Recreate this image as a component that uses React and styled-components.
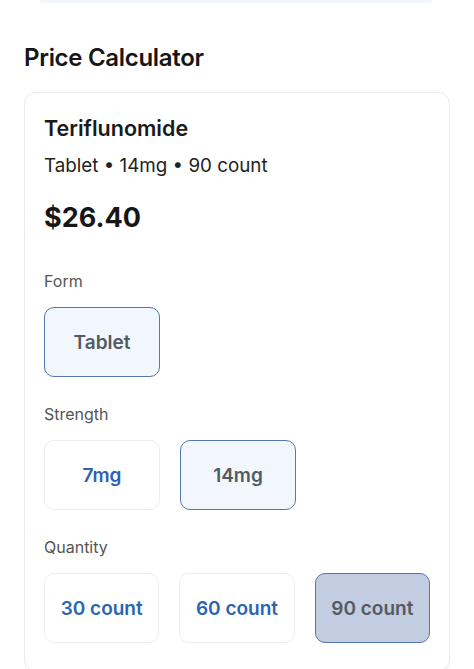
import React, { useState } from 'react';
import styled, { createGlobalStyle } from 'styled-components';

const GlobalStyle = createGlobalStyle`
  html, body {
    margin: 0;
    padding: 0;
    background: #fff;
  }
  body {
    font-family: Inter, "Noto Sans", sans-serif;
    color: #1a1a1a;
    -webkit-font-smoothing: antialiased;
  }
`;

const forms = ['Tablet'];
const strengths = ['7mg', '14mg'];
const quantities = ['30 count', '60 count', '90 count'];

const App = () => {
  const [form, setForm] = useState('Tablet');
  const [strength, setStrength] = useState('14mg');
  const [quantity, setQuantity] = useState('90 count');

  return (
    <Page>
      <GlobalStyle />
      <TopEdge />
      <Heading>Price Calculator</Heading>
      <Card>
        <DrugName>Teriflunomide</DrugName>
        <Summary>{form} • {strength} • {quantity}</Summary>
        <Price>$26.40</Price>

        <Group>
          <Label>Form</Label>
          <Options>
            {forms.map((f) => (
              <Option key={f} $selected={form === f} onClick={() => setForm(f)}>{f}</Option>
            ))}
          </Options>
        </Group>

        <Group>
          <Label>Strength</Label>
          <Options>
            {strengths.map((s) => (
              <Option key={s} $selected={strength === s} onClick={() => setStrength(s)}>{s}</Option>
            ))}
          </Options>
        </Group>

        <Group>
          <Label>Quantity</Label>
          <Options>
            {quantities.map((q) => (
              <Option
                key={q}
                $selected={quantity === q}
                $strong={quantity === q}
                onClick={() => setQuantity(q)}
              >
                {q}
              </Option>
            ))}
          </Options>
        </Group>
      </Card>
    </Page>
  );
};

export default App;

const Page = styled.div`
  padding: 0 24px;
`;

const TopEdge = styled.div`
  height: 3px;
  margin: 0 18px 0 16px;
  background: #f1f6fa;
  border-radius: 0 0 4px 4px;
`;

const Heading = styled.h2`
  margin: 40px 0 20px;
  font-size: 24px;
  font-weight: 600;
  letter-spacing: -0.3px;
  color: #161616;
`;

const Card = styled.div`
  border: 1px solid #ebebeb;
  border-radius: 12px;
  padding: 22px 19px 28px;
`;

const DrugName = styled.div`
  font-size: 21.5px;
  font-weight: 600;
  color: #1a1a1a;
`;

const Summary = styled.div`
  margin-top: 13px;
  font-size: 18.8px;
  color: #222;
`;

const Price = styled.div`
  margin-top: 24px;
  font-size: 27px;
  font-weight: 700;
  color: #161616;
`;

const Group = styled.div`
  margin-top: 37px;

  & + & {
    margin-top: 27px;
  }
`;

const Label = styled.div`
  font-size: 16px;
  color: #555;
`;

const Options = styled.div`
  display: flex;
  gap: 20px;
  margin-top: 16px;
`;

const Option = styled.button`
  width: 116px;
  height: 70px;
  border-radius: 10px;
  font-family: inherit;
  font-size: 19px;
  font-weight: 600;
  cursor: pointer;
  border: 1px solid ${(p) => (p.$selected ? '#5478ad' : '#ececec')};
  background: ${(p) => (p.$strong ? '#c2cde2' : p.$selected ? '#f1f7fd' : '#fff')};
  color: ${(p) => (p.$selected ? '#555a60' : '#2c64b2')};
`;
